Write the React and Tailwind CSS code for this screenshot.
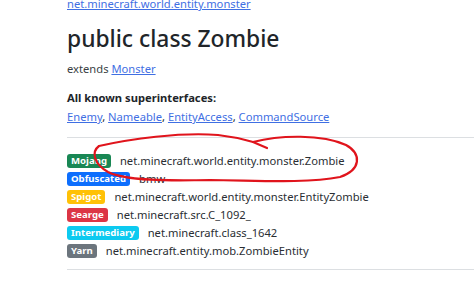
import React from 'react';

const mappings = [
    { name: 'Mojang', cls: 'bg-[#198754] text-white', value: 'net.minecraft.world.entity.monster.Zombie' },
    { name: 'Obfuscated', cls: 'bg-[#0d6efd] text-white', value: 'bmw' },
    { name: 'Spigot', cls: 'bg-[#ffc107] text-white', value: 'net.minecraft.world.entity.monster.EntityZombie' },
    { name: 'Searge', cls: 'bg-[#dc3545] text-white', value: 'net.minecraft.src.C_1092_' },
    { name: 'Intermediary', cls: 'bg-[#0dcaf0] text-white', value: 'net.minecraft.class_1642' },
    { name: 'Yarn', cls: 'bg-[#6c757d] text-white', value: 'net.minecraft.entity.mob.ZombieEntity' },
];

const interfaces = ['Enemy', 'Nameable', 'EntityAccess', 'CommandSource'];

const App = () => {
    return (
        <div className="relative w-[474px] h-[286px] overflow-hidden bg-white text-[#212529] font-['Noto_Sans',sans-serif]">
            <div className="pl-[67px]">
                <a className="block -mt-[4px] text-[11.2px] leading-[16px] text-[#3f6fe3] underline">
                    net.minecraft.world.entity.monster
                </a>
                <h1 className="mt-[12px] text-[22.8px] leading-[30px] font-medium whitespace-nowrap">public class Zombie</h1>
                <div className="mt-[7px] text-[11.2px] leading-[16px] text-[#3a3f44]">
                    extends <a className="text-[#3f6fe3] underline">Monster</a>
                </div>
                <div className="mt-[13px] text-[11.2px] leading-[16px] font-bold">All known superinterfaces:</div>
                <div className="mt-[3px] text-[11.2px] leading-[16px] whitespace-nowrap">
                    {interfaces.map((i, idx) => (
                        <span key={i}>
                            <a className="text-[#3f6fe3] underline">{i}</a>
                            {idx < interfaces.length - 1 && ', '}
                        </span>
                    ))}
                </div>
                <div className="mt-[12px] h-px bg-[#dcdfe2]" />
                <div className="mt-[14px]">
                    {mappings.map((m) => (
                        <div key={m.name} className="flex items-center gap-[9px] h-[18px] whitespace-nowrap">
                            <span className={`h-[14px] px-[4px] rounded-[3px] text-[9.6px] leading-[14px] font-bold ${m.cls}`}>
                                {m.name}
                            </span>
                            <span className="text-[11.2px] leading-[16px] text-[#2a2e33]">{m.value}</span>
                        </div>
                    ))}
                </div>
                <div className="mt-[9px] h-px bg-[#dcdfe2]" />
            </div>

            {/* red annotation scribble */}
            <svg className="absolute left-0 top-0 pointer-events-none" width="474" height="286">
                <path
                    d="M267 148 L253 142 C280 135 322 134 346 145 C362 154 361 170 340 177 C305 184 250 180 210 180 C170 181 125 181 108 172 C94 164 91 152 99 146 C130 139 180 132 218 135 C236 137 246 140 253 142"
                    fill="none"
                    stroke="#e0141c"
                    strokeWidth="2.2"
                    strokeLinecap="round"
                    strokeLinejoin="round"
                />
            </svg>
        </div>
    );
};

export default App;
